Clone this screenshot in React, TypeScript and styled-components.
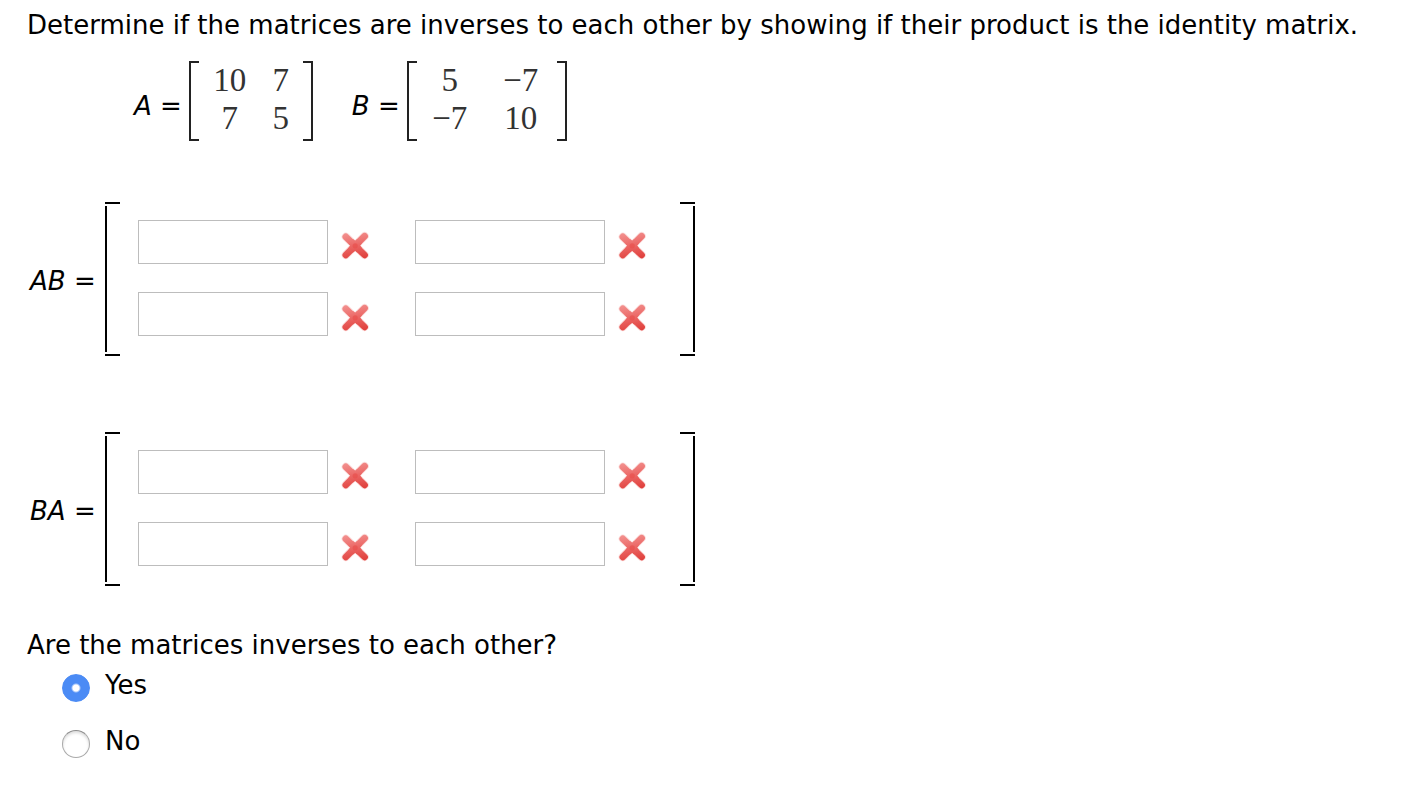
import React, { useState } from "react";
import styled, { createGlobalStyle } from "styled-components";

const GlobalStyle = createGlobalStyle`
  *, *::before, *::after { box-sizing: border-box; }
  body {
    margin: 0;
    background: #fff;
    color: #000;
    font-family: Verdana, "DejaVu Sans", sans-serif;
    font-size: 26px;
    line-height: 32px;
  }
`;

const Page = styled.main`
  padding: 9px 27px 32px;
`;

const Prompt = styled.p`
  margin: 0;
`;

const GivenRow = styled.div`
  display: flex;
  flex-wrap: wrap;
  gap: 39px;
  margin: 20px 0 0 107px;
`;

const Given = styled.div`
  display: flex;
  align-items: center;
  gap: 7px;
`;

const Equation = styled.span`
  white-space: nowrap;
  padding-top: 10px;
`;

const GivenMatrix = styled.div`
  position: relative;
  height: 80px;
  padding: 0 18px;

  &::before,
  &::after {
    content: "";
    position: absolute;
    top: 0;
    bottom: 0;
    width: 10px;
    border: 2px solid #222;
  }
  &::before {
    left: 0;
    border-right: 0;
  }
  &::after {
    right: 0;
    border-left: 0;
  }
`;

const Values = styled.table<{ $wide?: boolean }>`
  border-collapse: collapse;
  font-family: "Liberation Serif", serif;
  font-size: 33px;
  line-height: 38px;
  color: #333;

  td {
    width: ${(p) => (p.$wide ? 56 : 28)}px;
    padding: 0;
    text-align: center;
    white-space: nowrap;
  }
  td:first-child {
    width: ${(p) => (p.$wide ? 68 : 60)}px;
    padding-right: ${(p) => (p.$wide ? 18 : 14)}px;
  }
`;

const Answer = styled.section<{ $gap: number }>`
  display: flex;
  align-items: center;
  margin-top: ${(p) => p.$gap}px;
`;

const AnswerLabel = styled.div`
  flex: none;
  width: 78px;
  padding: 4px 0 0 3px;
  white-space: nowrap;
`;

const Bracket = styled.span<{ $side: "left" | "right" }>`
  flex: none;
  width: 15px;
  height: 154px;
  padding: 2px 0;
  border: solid #000;
  border-width: 2px 0;

  &::before {
    content: "";
    display: block;
    width: 2px;
    height: 146px;
    margin-left: ${(p) => (p.$side === "left" ? "0" : "auto")};
    background: #000;
  }
`;

const Cells = styled.div`
  display: grid;
  grid-template-columns: 277px 265px;
  gap: 28px 0;
  padding: 0 0 2px 18px;
`;

const Cell = styled.div`
  display: flex;
  align-items: center;
  gap: 12px;
`;

const Entry = styled.input`
  width: 190px;
  height: 44px;
  padding: 0 8px;
  border: 1px solid #bdbdbd;
  border-radius: 0;
  background: #fff;
  font: inherit;
`;

const Mark = styled.svg`
  flex: none;
  width: 30px;
  height: 30px;
  margin-top: 8px;
`;

const Choices = styled.fieldset`
  margin: 43px 0 0;
  padding: 0;
  border: 0;
`;

const Legend = styled.legend`
  padding: 0;
`;

const Choice = styled.label`
  display: flex;
  align-items: flex-start;
  gap: 15px;
  height: 32px;
  margin: 8px 0 24px 35px;
`;

const Radio = styled.input`
  appearance: none;
  width: 28px;
  height: 28px;
  margin: 5px 0 0;
  border: 1px solid #aaa;
  border-top-color: #8c8c8c;
  border-radius: 50%;
  background: #fff;
  box-shadow: inset 0 2px 3px #ddd;

  &:checked {
    border-color: #4b8bf5;
    background: radial-gradient(circle, #fff 0 3px, #4b8bf5 5px);
    box-shadow: none;
  }
`;

function Wrong({ id }: { id: string }) {
  return (
    <Mark viewBox="0 0 30 30" role="img" aria-label="Incorrect">
      <defs>
        <linearGradient id={id} gradientUnits="userSpaceOnUse" x1="12" y1="2" x2="17" y2="28">
          <stop offset="0" stopColor="#f28e8c" />
          <stop offset="0.5" stopColor="#eb6664" />
          <stop offset="1" stopColor="#e0403c" />
        </linearGradient>
      </defs>
      <g fill="none" strokeLinecap="round">
        <path d="M5.8 5.8 24.6 24M24.6 5.2 5.8 24" stroke="#fbdcdb" strokeWidth="8.2" />
        <path d="M5.8 5.8 24.6 24M24.6 5.2 5.8 24" stroke={`url(#${id})`} strokeWidth="6.6" />
        <path d="M12.2 11.6 18.2 17.8M18.2 11.6 12.2 17.8" stroke={`url(#${id})`} strokeWidth="7" />
      </g>
      <circle cx="15.2" cy="14.8" r="2.6" fill="#e84c4a" opacity="0.6" />
    </Mark>
  );
}

function Matrix({ name, rows, wide }: { name: string; rows: string[][]; wide?: boolean }) {
  return (
    <Given>
      <Equation>
        <i>{name}</i> =
      </Equation>
      <GivenMatrix>
        <Values $wide={wide} aria-label={`Matrix ${name}`}>
          <tbody>
            {rows.map((row, r) => (
              <tr key={r}>
                {row.map((value, c) => (
                  <td key={c}>{value}</td>
                ))}
              </tr>
            ))}
          </tbody>
        </Values>
      </GivenMatrix>
    </Given>
  );
}

function Product({ name, gap }: { name: string; gap: number }) {
  return (
    <Answer $gap={gap}>
      <AnswerLabel>
        <i>{name}</i> =
      </AnswerLabel>
      <Bracket $side="left" />
      <Cells>
        {["1-1", "1-2", "2-1", "2-2"].map((pos) => (
          <Cell key={pos}>
            <Entry type="text" aria-label={`${name} entry ${pos}`} />
            <Wrong id={`${name}-${pos}`} />
          </Cell>
        ))}
      </Cells>
      <Bracket $side="right" />
    </Answer>
  );
}

export default function App() {
  const [choice, setChoice] = useState("Yes");
  return (
    <Page>
      <GlobalStyle />
      <Prompt>
        Determine if the matrices are inverses to each other by showing if their product is the
        identity matrix.
      </Prompt>
      <GivenRow>
        <Matrix name="A" rows={[["10", "7"], ["7", "5"]]} />
        <Matrix name="B" wide rows={[["5", "−7"], ["−7", "10"]]} />
      </GivenRow>
      <Product name="AB" gap={61} />
      <Product name="BA" gap={76} />
      <Choices>
        <Legend>Are the matrices inverses to each other?</Legend>
        {["Yes", "No"].map((option) => (
          <Choice key={option}>
            <Radio
              type="radio"
              name="inverses"
              value={option}
              checked={choice === option}
              onChange={() => setChoice(option)}
            />
            {option}
          </Choice>
        ))}
      </Choices>
    </Page>
  );
}
